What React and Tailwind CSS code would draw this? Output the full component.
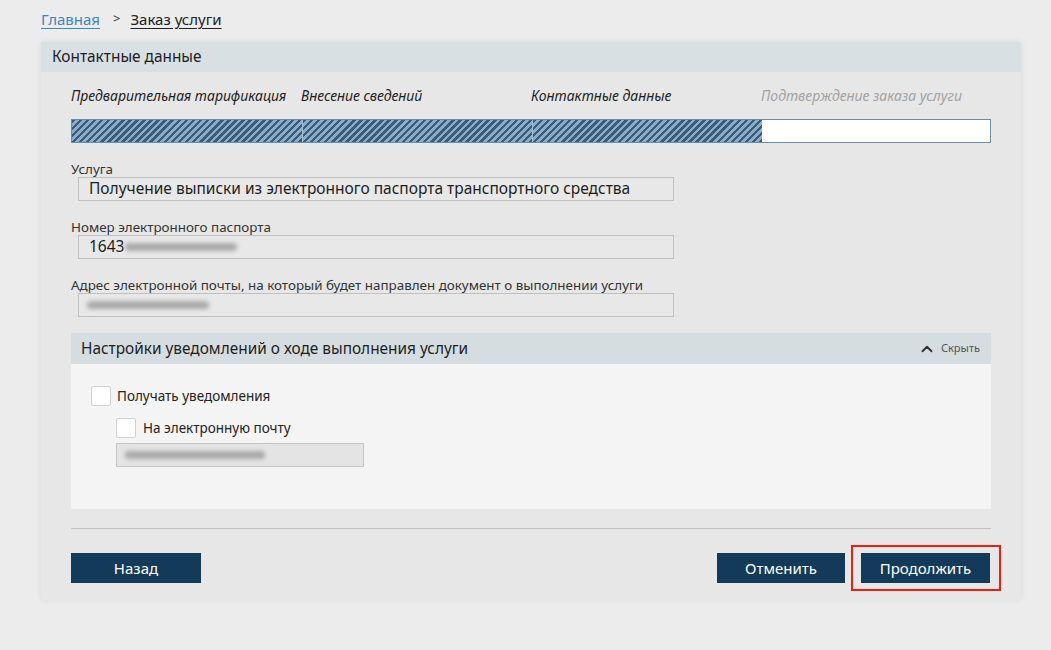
import { ChevronUp } from 'lucide-react';

const stripes =
  'bg-[repeating-linear-gradient(135deg,#3a5c79_0px,#3a5c79_2.5px,#8badca_2.5px,#8badca_5px)]';

function Blur({ className }) {
  return (
    <span
      className={`inline-block h-[8px] rounded-full bg-[#a9a9a9] blur-[2px] ${className}`}
    />
  );
}

function Field({ label, children }) {
  return (
    <div className="mt-[18px]">
      <div className="text-[13.4px] leading-[16px] text-[#333]">{label}</div>
      <div className="ml-[7px] flex h-[24px] w-[596px] items-center border border-[#bfbfbf] bg-[#e8e8e8] px-[10px] text-[15.5px] text-[#1e1e1e]">
        {children}
      </div>
    </div>
  );
}

function Checkbox() {
  return <span className="inline-block h-[20px] w-[20px] rounded-[2px] border border-[#d2d2d2] bg-white" />;
}

export default function App() {
  const steps = [
    { title: 'Предварительная тарификация', done: true },
    { title: 'Внесение сведений', done: true },
    { title: 'Контактные данные', done: true },
    { title: 'Подтверждение заказа услуги', done: false },
  ];

  return (
    <div
      className="min-h-[650px] bg-[#ececec] px-[41px] pb-[40px] pt-[8px] text-[#222]"
      style={{ fontFamily: '"Noto Sans", "Open Sans", sans-serif' }}
    >
      <nav className="flex h-[22px] items-center text-[15px]">
        <a className="text-[#3a87c2] underline underline-offset-[3px]">Главная</a>
        <span className="ml-[13px] mr-[10px] text-[13px] text-[#333]">&gt;</span>
        <a className="text-[#222] underline underline-offset-[3px]">Заказ услуги</a>
      </nav>

      <div className="mt-[12px] w-[980px] bg-[#e7e7e7] shadow-[0_0_6px_rgba(0,0,0,0.08)]">
        <div className="flex h-[30px] items-center bg-[#d8e0e4] px-[11px] text-[15.4px] text-[#1e1e1e]">
          Контактные данные
        </div>

        <div className="px-[30px] pb-[17px] pt-[15px]">
          <div className="flex">
            {steps.map((s) => (
              <div
                key={s.title}
                className={`w-[230px] text-[14px] italic leading-[18px] ${s.done ? 'text-[#1e1e1e]' : 'text-[#a3a3a3]'}`}
              >
                {s.title}
              </div>
            ))}
          </div>

          <div className="mt-[14px] flex h-[24px] w-[920px] border border-[#6b8ca5]">
            <div className={`w-[230px] ${stripes}`} />
            <div className={`w-[230px] border-l border-[#a4bfd3] ${stripes}`} />
            <div className={`w-[230px] border-l border-[#a4bfd3] ${stripes}`} />
            <div className="flex-1 bg-white" />
          </div>

          <Field label="Услуга">Получение выписки из электронного паспорта транспортного средства</Field>
          <Field label="Номер электронного паспорта">
            <span>1643</span>
            <Blur className="ml-[1px] w-[112px]" />
          </Field>
          <Field label="Адрес электронной почты, на который будет направлен документ о выполнении услуги">
            <Blur className="ml-[-2px] w-[122px]" />
          </Field>

          <div className="mt-[16px]">
            <div className="flex h-[31px] items-center justify-between bg-[#d6dde1] pl-[10px] pr-[11px]">
              <span className="text-[15.4px] text-[#1e1e1e]">Настройки уведомлений о ходе выполнения услуги</span>
              <span className="flex items-center gap-[5px] text-[11px] text-[#555]">
                <ChevronUp className="h-[18px] w-[18px] text-[#333]" strokeWidth={2.5} />
                Скрыть
              </span>
            </div>
            <div className="h-[145px] bg-[#f4f4f4] px-[20px] pt-[22px]">
              <label className="flex items-center gap-[6px] text-[13.5px] text-[#222]">
                <Checkbox />
                Получать уведомления
              </label>
              <div className="ml-[25px] mt-[12px]">
                <label className="flex items-center gap-[7px] text-[13.5px] text-[#222]">
                  <Checkbox />
                  На электронную почту
                </label>
                <div className="mt-[4px] flex h-[24px] w-[248px] items-center border border-[#c4c4c4] bg-[#e4e4e4] px-[8px]">
                  <Blur className="w-[140px]" />
                </div>
              </div>
            </div>
          </div>

          <div className="mt-[19px] border-t border-[#c0c0c0]" />

          <div className="mt-[24px] flex items-center justify-between">
            <button className="h-[30px] w-[130px] bg-[#133a59] text-[15px] text-white">Назад</button>
            <div className="mr-[1px] flex gap-[16px]">
              <button className="h-[30px] w-[128px] bg-[#133a59] text-[15px] text-white">Отменить</button>
              <div className="relative">
                <button className="h-[30px] w-[129px] bg-[#133a59] text-[15px] text-white">Продолжить</button>
                <span className="pointer-events-none absolute bottom-[-8px] left-[-10px] right-[-11px] top-[-8px] border-2 border-[#f01e0a]" />
              </div>
            </div>
          </div>
        </div>
      </div>
    </div>
  );
}
